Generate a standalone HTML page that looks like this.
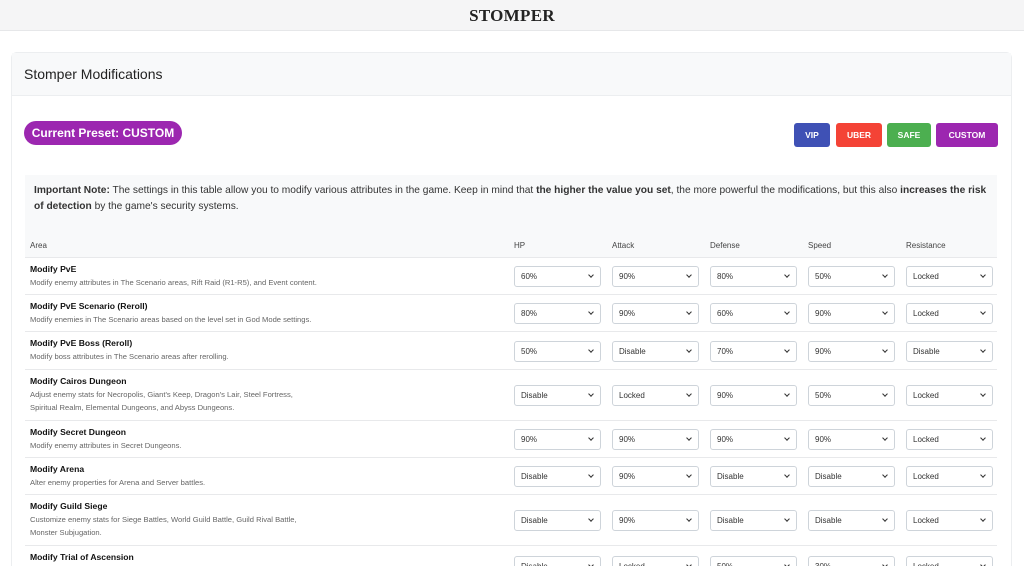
<!DOCTYPE html>
<html><head><meta charset="utf-8"><style>
*{box-sizing:border-box;margin:0;padding:0}
html,body{width:1024px;height:566px;overflow:hidden}
body{background:#fff;font-family:"Liberation Sans",sans-serif;color:#212529;position:relative}
.top{position:absolute;left:0;top:0;width:1024px;height:31px;background:#f5f5f6;border-bottom:1px solid #e6e7e9;text-align:center}
.logo{font-family:"Liberation Serif",serif;font-weight:bold;font-size:17px;line-height:31px;color:#222;letter-spacing:.3px}
.card{position:absolute;left:11px;top:52px;width:1001px;height:530px;border:1px solid #eceef0;border-radius:6px;background:#fff}
.ch{height:43px;background:#f8f9fa;border-bottom:1px solid #eceef0;padding-left:12px;font-size:14px;line-height:43px;color:#222}
.preset{position:absolute;left:24px;top:121px;width:158px;height:24px;border-radius:12px;background:#9c27b0;color:#fff;font-weight:bold;font-size:12px;line-height:24px;text-align:center}
.btn{position:absolute;top:123px;height:24px;border-radius:3px;color:#fff;font-weight:bold;font-size:8.5px;line-height:24px;text-align:center}
.note{position:absolute;left:25px;top:175px;width:972px;height:60px;background:#f8f9fa;padding:8px 9px;font-size:10.2px;line-height:16px;color:#333}
.th{position:absolute;left:25px;top:235px;width:972px;height:22px;background:#f8f9fa;font-size:8px;line-height:22px;color:#444}
.row{position:absolute;left:25px;width:972px;border-top:1px solid #e8e9eb}
.t{position:absolute;left:5px;font-size:8.6px;font-weight:bold;color:#111}
.d{position:absolute;left:5px;font-size:7.6px;line-height:13px;color:#666;white-space:nowrap}
.s{position:absolute;width:87px;height:21px;border:1px solid #ced4da;border-radius:3px;font-size:8px;line-height:19px;padding-left:6px;color:#333;background:#fff}
.s:after{content:"";position:absolute;right:7px;top:6px;width:3px;height:3px;border-right:1.5px solid #333;border-bottom:1.5px solid #333;transform:rotate(45deg)}
</style></head><body>
<div class="top"><span class="logo">STOMPER</span></div>
<div class="card"><div class="ch">Stomper Modifications</div></div>
<div class="preset">Current Preset: CUSTOM</div>
<div class="btn" style="left:794px;width:36px;background:#3f51b5">VIP</div>
<div class="btn" style="left:836px;width:46px;background:#f44336">UBER</div>
<div class="btn" style="left:887px;width:44px;background:#4caf50">SAFE</div>
<div class="btn" style="left:936px;width:62px;background:#9c27b0">CUSTOM</div>
<div class="note"><b>Important Note:</b> The settings in this table allow you to modify various attributes in the game. Keep in mind that <b>the higher the value you set</b>, the more powerful the modifications, but this also <b>increases the risk of detection</b> by the game's security systems.</div>
<div class="th"><span style="position:absolute;left:5px">Area</span><span style="position:absolute;left:489px">HP</span><span style="position:absolute;left:587px">Attack</span><span style="position:absolute;left:685px">Defense</span><span style="position:absolute;left:783px">Speed</span><span style="position:absolute;left:881px">Resistance</span></div>
<div id="rows"></div>
<script>
var R=[
[257,37,"Modify PvE",["Modify enemy attributes in The Scenario areas, Rift Raid (R1-R5), and Event content."],["60%","90%","80%","50%","Locked"]],
[294,37,"Modify PvE Scenario (Reroll)",["Modify enemies in The Scenario areas based on the level set in God Mode settings."],["80%","90%","60%","90%","Locked"]],
[331,38,"Modify PvE Boss (Reroll)",["Modify boss attributes in The Scenario areas after rerolling."],["50%","Disable","70%","90%","Disable"]],
[369,51,"Modify Cairos Dungeon",["Adjust enemy stats for Necropolis, Giant's Keep, Dragon's Lair, Steel Fortress,","Spiritual Realm, Elemental Dungeons, and Abyss Dungeons."],["Disable","Locked","90%","50%","Locked"]],
[420,37,"Modify Secret Dungeon",["Modify enemy attributes in Secret Dungeons."],["90%","90%","90%","90%","Locked"]],
[457,37,"Modify Arena",["Alter enemy properties for Arena and Server battles."],["Disable","90%","Disable","Disable","Locked"]],
[494,51,"Modify Guild Siege",["Customize enemy stats for Siege Battles, World Guild Battle, Guild Rival Battle,","Monster Subjugation."],["Disable","90%","Disable","Disable","Locked"]],
[545,31,"Modify Trial of Ascension",[""],["Disable","Locked","50%","30%","Locked"]]];
var h="";R.forEach(function(r,k){h+='<div class="row" style="top:'+r[0]+'px;height:'+r[1]+'px"><div class="t" style="top:6px">'+r[2]+'</div><div class="d" style="top:18px">'+r[3].join("<br>")+'</div>';
var st=k==7?10:Math.round((r[1]-21)/2);r[4].forEach(function(v,i){h+='<div class="s" style="left:'+(489+98*i)+'px;top:'+st+'px">'+v+'</div>'});h+='</div>'});
document.getElementById("rows").innerHTML=h;
</script>
</body></html>
